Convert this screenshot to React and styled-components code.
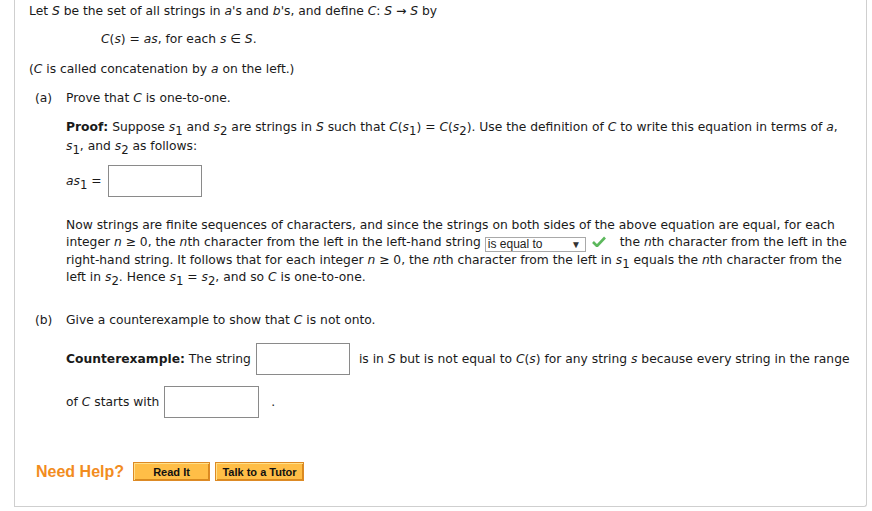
import styled, { createGlobalStyle } from 'styled-components';

const GlobalStyle = createGlobalStyle`
  body {
    margin: 0;
    background: #fff;
    font-family: "DejaVu Sans", Verdana, sans-serif;
    font-size: 12.3px;
    color: #1a1a1a;
  }
`;

const Panel = styled.div`
  margin-left: 14px;
  width: 853px;
  height: 507px;
  box-sizing: border-box;
  padding: 3px 14px 0 14px;
  border: 1px solid #cfcfcf;
  border-top: none;
  border-bottom-right-radius: 3px;
`;

const Line = styled.div`
  line-height: 17px;
  margin-top: ${(p) => p.$mt || 0}px;
  padding-left: ${(p) => p.$indent || 0}px;
`;

const Var = styled.i`
  font-style: italic;
`;

const Sub = styled.sub`
  font-size: 0.95em;
  position: relative;
  top: 4px;
  vertical-align: baseline;
  line-height: 0;
`;

const Part = styled.div`
  display: flex;
  margin-top: ${(p) => p.$mt || 0}px;
  padding-left: 6px;
  line-height: 17px;
`;

const PartLabel = styled.span`
  width: 31px;
  flex: none;
`;

const Block = styled.div`
  padding-left: 37px;
  margin-top: ${(p) => p.$mt || 0}px;
  line-height: ${(p) => p.$lh || 17}px;
`;

const Row = styled.div`
  display: flex;
  align-items: center;
  padding-left: 37px;
  margin-top: ${(p) => p.$mt || 0}px;
  gap: ${(p) => p.$gap || 5}px;
  white-space: nowrap;
`;

const Answer = styled.input`
  width: ${(p) => p.$w || 94}px;
  height: 32px;
  flex: none;
  box-sizing: border-box;
  border: 1px solid #8a8a8a;
  margin: 0;
  padding: 0 4px;
  font: inherit;
`;

const Select = styled.span`
  display: inline-flex;
  align-items: center;
  justify-content: space-between;
  width: 101px;
  height: 15px;
  box-sizing: border-box;
  border: 1px solid #a9a9a9;
  padding: 0 4px 0 2px;
  vertical-align: -2px;
  font-family: "Liberation Sans", Arial, sans-serif;
  font-size: 12px;
  line-height: 13px;
  color: #222;
`;

const Arrow = styled.span`
  font-size: 10px;
  color: #333;
`;

const Check = styled.svg`
  width: 14px;
  height: 11px;
  margin: 0 14px 0 6px;
  vertical-align: -1px;
`;

const HelpRow = styled.div`
  display: flex;
  align-items: center;
  margin-top: ${(p) => p.$mt || 0}px;
  padding-left: 7px;
  gap: 5px;
`;

const HelpText = styled.span`
  font-family: "Liberation Sans", Arial, sans-serif;
  font-weight: bold;
  font-size: 16px;
  color: #f28c1e;
  margin-right: 4px;
`;

const HelpButton = styled.button`
  width: ${(p) => p.$w}px;
  height: 19px;
  padding: 0;
  border: 1px solid #dd8a25;
  background: #ffbe47;
  box-shadow: inset 1px 1px 0 #ffe08a, inset -1px -1px 0 #d98a1f;
  font-family: "Liberation Sans", Arial, sans-serif;
  font-weight: bold;
  font-size: 11px;
  color: #111;
  cursor: pointer;
`;

const Strong = styled.b`
  font-weight: bold;
`;

const After = styled.span`
  margin-left: 4px;
`;

const Dot = styled.span`
  margin-left: 7px;
`;

export default function App() {
  return (
    <>
      <GlobalStyle />
      <Panel>
        <Line>
          Let <Var>S</Var> be the set of all strings in <Var>a</Var>'s and <Var>b</Var>'s, and define{' '}
          <Var>C</Var>: <Var>S</Var> → <Var>S</Var> by
        </Line>
        <Line $mt={11} $indent={72}>
          <Var>C</Var>(<Var>s</Var>) = <Var>as</Var>, for each <Var>s</Var> ∈ <Var>S</Var>.
        </Line>
        <Line $mt={13}>
          (<Var>C</Var> is called concatenation by <Var>a</Var> on the left.)
        </Line>
        <Part $mt={12}>
          <PartLabel>(a)</PartLabel>
          <span>
            Prove that <Var>C</Var> is one-to-one.
          </span>
        </Part>
        <Block $mt={11} $lh={19}>
          <Strong>Proof:</Strong> Suppose <Var>s</Var>
          <Sub>1</Sub> and <Var>s</Var>
          <Sub>2</Sub> are strings in <Var>S</Var> such that <Var>C</Var>(<Var>s</Var>
          <Sub>1</Sub>) = <Var>C</Var>(<Var>s</Var>
          <Sub>2</Sub>). Use the definition of <Var>C</Var> to write this equation in terms of{' '}
          <Var>a</Var>, <Var>s</Var>
          <Sub>1</Sub>, and <Var>s</Var>
          <Sub>2</Sub> as follows:
        </Block>
        <Row $mt={9} $gap={6}>
          <span>
            <Var>as</Var>
            <Sub>1</Sub> =
          </span>
          <Answer />
        </Row>
        <Block $mt={20}>
          Now strings are finite sequences of characters, and since the strings on both sides of the
          above equation are equal, for each integer <Var>n</Var> ≥ 0, the <Var>n</Var>th character
          from the left in the left-hand string{' '}
          <Select>
            is equal to<Arrow>▼</Arrow>
          </Select>
          <Check viewBox="0 0 14 11">
            <path d="M1 6 L5 10 L13 1.5" fill="none" stroke="#5cb85c" strokeWidth="2.6" strokeLinejoin="round" />
          </Check>
          the <Var>n</Var>th character from the left in the right-hand string. It follows that for
          each integer <Var>n</Var> ≥ 0, the <Var>n</Var>th character from the left in <Var>s</Var>
          <Sub>1</Sub> equals the <Var>n</Var>th character from the left in <Var>s</Var>
          <Sub>2</Sub>. Hence <Var>s</Var>
          <Sub>1</Sub> = <Var>s</Var>
          <Sub>2</Sub>, and so <Var>C</Var> is one-to-one.
        </Block>
        <Part $mt={26}>
          <PartLabel>(b)</PartLabel>
          <span>
            Give a counterexample to show that <Var>C</Var> is not onto.
          </span>
        </Part>
        <Row $mt={14}>
          <span>
            <Strong>Counterexample:</Strong> The string
          </span>
          <Answer />
          <After>
            is in <Var>S</Var> but is not equal to <Var>C</Var>(<Var>s</Var>) for any string{' '}
            <Var>s</Var> because every string in the range
          </After>
        </Row>
        <Row $mt={11}>
          <span>
            of <Var>C</Var> starts with
          </span>
          <Answer $w={95} />
          <Dot>.</Dot>
        </Row>
        <HelpRow $mt={44}>
          <HelpText>Need Help?</HelpText>
          <HelpButton $w={77}>Read It</HelpButton>
          <HelpButton $w={89}>Talk to a Tutor</HelpButton>
        </HelpRow>
      </Panel>
    </>
  );
}
